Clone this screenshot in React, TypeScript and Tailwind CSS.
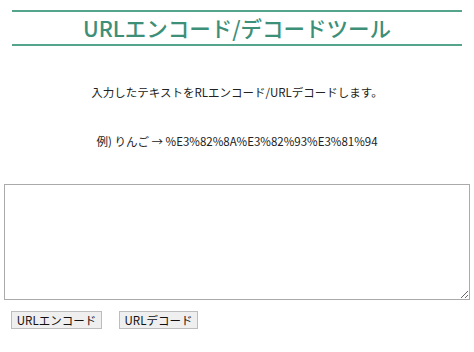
import React from "react";

export default function App() {
  return (
    <div
      className="w-[474px] h-[352px] bg-white text-[#222] overflow-hidden"
      style={{ fontFamily: '"Noto Sans CJK JP", "Noto Sans", sans-serif' }}
    >
      <h1 className="mt-[10px] mx-[12px] border-y-2 border-[#55a58d] text-center text-[21.5px] leading-[32px] font-medium text-[#3d8f78]">
        URLエンコード/デコードツール
      </h1>
      <p className="mt-[37px] text-center text-[11.5px] leading-[18px]">
        入力したテキストをRLエンコード/URLデコードします。
      </p>
      <p className="mt-[31px] text-center text-[11.5px] leading-[18px]">
        例) りんご → %E3%82%8A%E3%82%93%E3%81%94
      </p>
      <div className="mt-[34px] px-[4px]">
        <textarea className="block w-full h-[116px] border border-[#aaaaaa] resize-y outline-none" />
      </div>
      <div className="mt-[11px] flex pl-[11px] gap-[17px]">
        <button className="w-[91px] h-[18px] bg-[#efefef] border border-[#bdbdbd] text-[11.5px] leading-[16px] text-[#111] flex items-center justify-center">
          URLエンコード
        </button>
        <button className="w-[79px] h-[18px] bg-[#efefef] border border-[#bdbdbd] text-[11.5px] leading-[16px] text-[#111] flex items-center justify-center">
          URLデコード
        </button>
      </div>
    </div>
  );
}
